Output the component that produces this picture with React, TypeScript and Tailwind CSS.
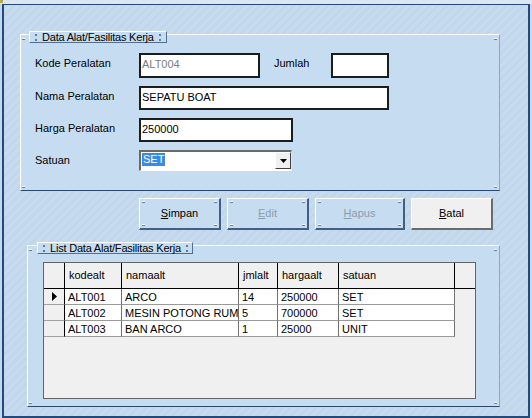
import React from "react";

// little corner ticks drawn on the 3d boxes
const Ticks = ({ color = "#5f7d9e" }: { color?: string }) => (
  <>
    <span className="absolute left-[2px] top-[2px] w-[3px] h-[2px] border-t border-white" style={{ background: color }} />
    <span className="absolute right-[2px] top-[2px] w-[3px] h-[2px] border-t border-white" style={{ background: color }} />
    <span className="absolute left-[2px] bottom-[2px] w-[3px] h-[2px] border-t border-white" style={{ background: color }} />
    <span className="absolute right-[2px] bottom-[2px] w-[3px] h-[2px] border-t border-white" style={{ background: color }} />
  </>
);

const Dots = () => (
  <span className="w-[12px] h-full flex flex-col items-center justify-center gap-[3px] shrink-0">
    <span className="w-[2px] h-[2px] bg-[#5f7d9e]" />
    <span className="w-[2px] h-[2px] bg-[#5f7d9e]" />
  </span>
);

const Legend = ({ text, className }: { text: string; className: string }) => (
  <div
    className={`absolute top-[-4px] h-[12px] flex items-center bg-[#c6ddf1] border-t border-l border-white border-r border-b border-r-[#506f92] border-b-[#506f92] ${className}`}
  >
    <Dots />
    <span className="leading-[12px] whitespace-nowrap tracking-[-0.2px]">{text}</span>
    <span className="flex-1" />
    <Dots />
  </div>
);

const Field = ({ w, h, value, muted }: { w: string; h: string; value?: string; muted?: boolean }) => (
  <div className={`${w} ${h} bg-white border-2 border-[#1c1c1c] pl-[1px] pt-[3px] leading-[13px] ${muted ? "text-[#7d7d7d]" : "text-black"}`}>
    {value}
  </div>
);

const Label = ({ text, w = "w-[104px]" }: { text: string; w?: string }) => (
  <div className={`${w} pt-[4px] leading-[13px] whitespace-nowrap`}>{text}</div>
);

const BlueButton = ({ label, w, disabled }: { label: string; w: string; disabled?: boolean }) => (
  <button
    type="button"
    className={`relative ${w} h-[32px] bg-[#c6ddf1] border-t border-l border-white border-b-2 border-r-2 border-b-[#3e5f86] border-r-[#3e5f86] leading-[13px] ${
      disabled ? "text-[#8c9cad]" : "text-black"
    }`}
  >
    <Ticks />
    <span className="underline">{label[0]}</span>
    {label.slice(1)}
  </button>
);

const cols = [
  { key: "kodealt", w: "w-[57px]" },
  { key: "namaalt", w: "w-[117px]" },
  { key: "jmlalt", w: "w-[39px]" },
  { key: "hargaalt", w: "w-[61px]" },
  { key: "satuan", w: "w-[116px]" },
];

const rows = [
  ["ALT001", "ARCO", "14", "250000", "SET"],
  ["ALT002", "MESIN POTONG RUMPUT", "5", "700000", "SET"],
  ["ALT003", "BAN ARCO", "1", "25000", "UNIT"],
];

export default function App() {
  return (
    <div className="w-[532px] h-[418px] flex flex-col overflow-hidden bg-[#c3d8ec] text-[11px] text-black font-['Liberation_Sans',Arial,sans-serif]">
      {/* bottom of the title bar */}
      <div className="h-[4px] shrink-0 bg-[#dbe6f1] flex">
        <span className="w-[3px] h-[3px] bg-[#b8a850]" />
      </div>

      <div className="flex-1 mx-[2px] border-t border-x-2 border-b-2 border-[#25497a] flex flex-col bg-[repeating-linear-gradient(135deg,#c2d7eb_0px,#c2d7eb_3px,#c7dbee_3px,#c7dbee_6px)]">
        {/* form frame */}
        <div className="relative ml-[16px] mt-[29px] w-[480px] h-[157px] shrink-0 bg-[#c6ddf1] border-t border-l border-white border-r border-b border-r-[#8ea6be] border-b-[#29496f] pl-[14px] pt-[18px] flex flex-col gap-[8px]">
          <span className="absolute left-[1px] top-[3px] w-[3px] h-[2px] bg-[#5f7d9e] border-t border-white" />
          <span className="absolute right-[2px] top-[3px] w-[3px] h-[2px] bg-[#5f7d9e] border-t border-white" />
          <span className="absolute left-[1px] bottom-[2px] w-[3px] h-[2px] bg-[#5f7d9e] border-t border-white" />
          <span className="absolute right-[2px] bottom-[2px] w-[3px] h-[2px] bg-[#5f7d9e] border-t border-white" />
          <Legend text="Data Alat/Fasilitas Kerja" className="left-[8px] w-[138px]" />

          <div className="flex items-start">
            <Label text="Kode Peralatan" />
            <Field w="w-[121px]" h="h-[25px]" value="ALT004" muted />
            <Label text="Jumlah" w="w-[57px] ml-[14px]" />
            <Field w="w-[58px]" h="h-[25px]" />
          </div>
          <div className="flex items-start">
            <Label text="Nama Peralatan" />
            <Field w="w-[250px]" h="h-[24px]" value="SEPATU BOAT" />
          </div>
          <div className="flex items-start">
            <Label text="Harga Peralatan" />
            <Field w="w-[154px]" h="h-[24px]" value="250000" />
          </div>
          <div className="flex items-start">
            <Label text="Satuan" w="w-[104px] pt-[3px]" />
            <div className="w-[153px] h-[21px] bg-white border-t-2 border-l-2 border-[#6a6a6a] border-b border-r border-b-white border-r-[#e6e6e6] flex items-start">
              <span className="mt-[1px] ml-[1px] px-[1px] h-[13px] leading-[13px] bg-[#3b8ae4] text-white">SET</span>
              <div className="ml-auto w-[16px] h-[17px] bg-[#f0f0f0] border-t border-l border-white border-b border-r border-b-[#404040] border-r-[#404040] flex items-center justify-center">
                <svg width="7" height="4" viewBox="0 0 7 4">
                  <polygon points="0,0 7,0 3.5,4" fill="#000" />
                </svg>
              </div>
            </div>
          </div>
        </div>

        {/* actions */}
        <div className="ml-[135px] mt-[7px] flex gap-[6px] shrink-0">
          <BlueButton label="Simpan" w="w-[82px]" />
          <BlueButton label="Edit" w="w-[82px]" disabled />
          <BlueButton label="Hapus" w="w-[90px]" disabled />
          <button
            type="button"
            className="w-[82px] h-[32px] bg-[#f0f0f0] border-t border-l border-white border-b-2 border-r-2 border-b-[#6b6b6b] border-r-[#6b6b6b] leading-[13px]"
          >
            <span className="underline">B</span>atal
          </button>
        </div>

        {/* list frame */}
        <div className="relative ml-[23px] mt-[15px] w-[473px] h-[162px] shrink-0 bg-[#c6ddf1] border-t border-l border-white border-r border-b border-r-[#8ea6be] border-b-[#29496f] pl-[15px] pt-[16px]">
          <span className="absolute left-[1px] top-[3px] w-[3px] h-[2px] bg-[#5f7d9e] border-t border-white" />
          <span className="absolute right-[2px] top-[3px] w-[3px] h-[2px] bg-[#5f7d9e] border-t border-white" />
          <span className="absolute left-[1px] bottom-[2px] w-[3px] h-[2px] bg-[#5f7d9e] border-t border-white" />
          <span className="absolute right-[2px] bottom-[2px] w-[3px] h-[2px] bg-[#5f7d9e] border-t border-white" />
          <Legend text="List Data Alat/Fasilitas Kerja" className="left-[9px] w-[156px]" />

          <div className="w-[433px] h-[137px] bg-[#f0f0f0] border border-[#646464] flex flex-col">
            <div className="flex h-[26px] shrink-0 border-b border-black">
              <div className="w-[21px] border-r border-black" />
              {cols.map((c) => (
                <div key={c.key} className={`${c.w} border-r border-black flex items-center pl-[4px] leading-[13px]`}>
                  {c.key}
                </div>
              ))}
            </div>
            {rows.map((r, i) => (
              <div key={r[0]} className="flex h-[16px] shrink-0">
                <div className="w-[21px] border-r border-black border-b border-b-[#a0a0a0] flex items-center justify-center">
                  {i === 0 && (
                    <svg width="5" height="9" viewBox="0 0 5 9">
                      <polygon points="0,0 5,4.5 0,9" fill="#000" />
                    </svg>
                  )}
                </div>
                {r.map((v, j) => (
                  <div
                    key={j}
                    className={`${cols[j].w} shrink-0 bg-white border-r border-b border-r-[#707070] border-b-[#9a9a9a] pl-[3px] pt-[2px] leading-[13px] whitespace-nowrap overflow-hidden`}
                  >
                    {v}
                  </div>
                ))}
              </div>
            ))}
          </div>
        </div>
      </div>
    </div>
  );
}
